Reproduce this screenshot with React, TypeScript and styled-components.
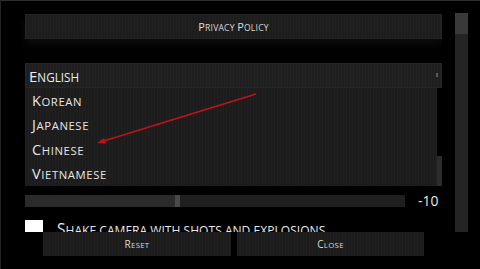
import React from "react";
import styled, { createGlobalStyle } from "styled-components";

const Global = createGlobalStyle`
  html, body { margin: 0; padding: 0; background: #000; }
  * { box-sizing: border-box; }
`;

const texture = `repeating-linear-gradient(90deg, rgba(255,255,255,0.018) 0 1px, rgba(0,0,0,0) 1px 3px)`;

const Small = styled.span`
  font-size: 0.78em;
  text-transform: uppercase;
`;

function SmallCaps({ text }: { text: string }) {
  const parts = text.match(/[A-Z0-9\-]+|[^A-Z0-9\-]+/g) || [];
  return (
    <span>
      {parts.map((p, i) =>
        /^[A-Z0-9\-]+$/.test(p) ? <span key={i}>{p}</span> : <Small key={i}>{p}</Small>
      )}
    </span>
  );
}

const Screen = styled.div`
  position: relative;
  width: 480px;
  height: 269px;
  background: #000;
  border-top: 1px solid #2e2e2e;
  border-left: 1px solid #232323;
  display: grid;
  grid-template-rows: 231px 1fr;
  overflow: hidden;
  font-family: "Open Sans", "Noto Sans", sans-serif;
  color: #e4e4e4;
`;

const ScrollArea = styled.div`
  display: flex;
  min-height: 0;
`;

const Content = styled.div`
  width: 441px;
  padding: 13px 0 0 24px;
  overflow: hidden;
  display: flex;
  flex-direction: column;
  & > * { flex-shrink: 0; }
`;

const WideButton = styled.div`
  height: 25px;
  background-color: #1d1d1d;
  background-image: ${texture};
  border: 1px solid #242424;
  display: flex;
  align-items: center;
  justify-content: center;
  font-size: 11px;
  letter-spacing: 0.2px;
  color: #dcdcdc;
  box-shadow: 0 6px 8px rgba(20, 20, 20, 0.6);
`;

const Dropdown = styled.div`
  margin-top: 24px;
  display: flex;
  flex-direction: column;
`;

const DropHeader = styled.div`
  height: 25px;
  background-color: #1f1f1f;
  background-image: ${texture};
  border: 1px solid #262626;
  display: flex;
  align-items: center;
  justify-content: space-between;
  padding: 0 3px 0 3px;
  font-size: 15px;
  color: #ececec;
`;

const Caret = styled.span`
  width: 2px;
  height: 4px;
  background: #5a5a5a;
  margin-bottom: 2px;
`;

const ListWrap = styled.div`
  display: flex;
  height: 98px;
`;

const List = styled.div`
  width: 412px;
  background-color: #1c1c1c;
  background-image: ${texture};
  display: flex;
  flex-direction: column;
`;

const Item = styled.div`
  height: 24.5px;
  display: flex;
  align-items: center;
  padding-left: 7px;
  font-size: 14.5px;
  letter-spacing: 0.6px;
  color: #e6e6e6;
`;

const ListBar = styled.div`
  width: 5px;
  display: flex;
  flex-direction: column;
  justify-content: flex-end;
`;

const ListThumb = styled.div`
  height: 30px;
  background: #2c2c2c;
`;

const SliderRow = styled.div`
  margin-top: 9px;
  display: flex;
  align-items: center;
  height: 12px;
`;

const Track = styled.div`
  width: 380px;
  height: 12px;
  display: flex;
  background: #1f1f1f;
`;

const Fill = styled.div`
  background: #2b2b2b;
  height: 100%;
`;

const Thumb = styled.div`
  width: 5px;
  height: 100%;
  background: #4a4a4a;
`;

const Value = styled.span`
  margin-left: 13px;
  font-size: 14px;
  color: #e8e8e8;
  line-height: 12px;
`;

const CheckRow = styled.div`
  margin-top: 13px;
  display: flex;
  align-items: flex-start;
  gap: 14px;
`;

const Box = styled.div`
  width: 18px;
  height: 18px;
  background: #fff;
  flex: none;
`;

const CheckLabel = styled.span`
  font-size: 15.5px;
  color: #e6e6e6;
  line-height: 16px;
  margin-top: 1px;
  white-space: nowrap;
`;

const Scrollbar = styled.div`
  margin: 12px 0 0 13px;
  width: 13px;
  background: #242424;
  display: flex;
  flex-direction: column;
`;

const ScrollThumb = styled.div`
  height: 21px;
  background: #393939;
`;

const Footer = styled.div`
  display: flex;
  gap: 6px;
  padding-left: 42px;
  align-items: flex-start;
`;

const FootButton = styled.div<{ $w: number }>`
  width: ${(p) => p.$w}px;
  height: 24px;
  background-color: #1c1c1c;
  background-image: ${texture};
  display: flex;
  align-items: center;
  justify-content: center;
  font-size: 10px;
  letter-spacing: 0.3px;
  color: #dadada;
`;

const Annotation = styled.svg`
  position: absolute;
  left: -1px;
  top: -1px;
  pointer-events: none;
`;

export default function App() {
  const fillPct = 150;
  const languages = ["Korean", "Japanese", "Chinese", "Vietnamese"];
  return (
    <>
      <Global />
      <Screen>
        <ScrollArea>
          <Content>
            <WideButton>
              <SmallCaps text="Privacy Policy" />
            </WideButton>
            <Dropdown>
              <DropHeader>
                <SmallCaps text="English" />
                <Caret />
              </DropHeader>
              <ListWrap>
                <List>
                  {languages.map((l) => (
                    <Item key={l}>
                      <SmallCaps text={l} />
                    </Item>
                  ))}
                </List>
                <ListBar>
                  <ListThumb />
                </ListBar>
              </ListWrap>
            </Dropdown>
            <SliderRow>
              <Track>
                <Fill style={{ width: fillPct }} />
                <Thumb />
              </Track>
              <Value>-10</Value>
            </SliderRow>
            <CheckRow>
              <Box />
              <CheckLabel>
                <SmallCaps text="Shake camera with shots and explosions" />
              </CheckLabel>
            </CheckRow>
          </Content>
          <Scrollbar>
            <ScrollThumb />
          </Scrollbar>
        </ScrollArea>
        <Footer>
          <FootButton $w={188}>
            <SmallCaps text="Reset" />
          </FootButton>
          <FootButton $w={187}>
            <SmallCaps text="Close" />
          </FootButton>
        </Footer>
        <Annotation width="480" height="269" viewBox="0 0 480 269">
          <line x1="256" y1="94" x2="102" y2="141.5" stroke="#c4121c" strokeWidth="1.4" />
          <polygon points="97,143 104,138 106,143.5" fill="#c4121c" />
        </Annotation>
      </Screen>
    </>
  );
}
